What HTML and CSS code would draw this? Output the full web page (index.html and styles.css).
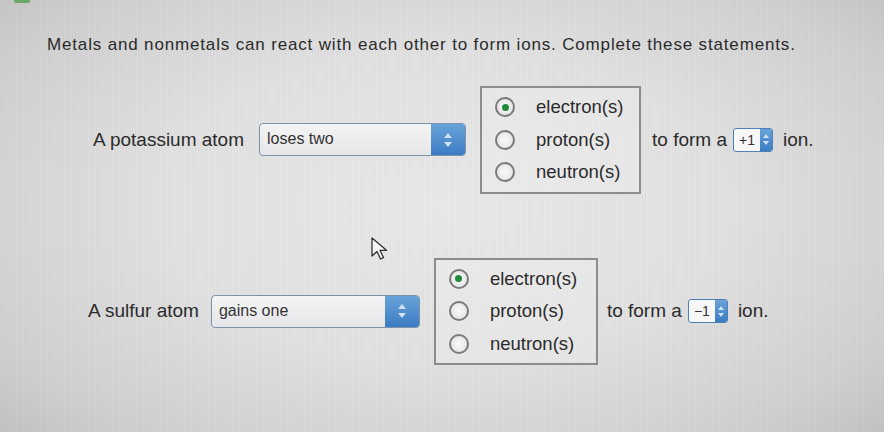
FILE: index.html
```html
<!DOCTYPE html>
<html>
    <head>
        <title>Ions</title><meta charset="UTF-8">
        <link rel="stylesheet" href="styles.css">
    </head>
    <body>
        <div class="page">
            <span class="corner"></span>
            <p class="intro">Metals and nonmetals can react with each other to form ions. Complete these statements.</p>

            <div class="row row-one">
                <span class="lead">A potassium atom</span>
                <div class="select">
                    <span class="value">loses two</span>
                    <span class="arrows"><i class="up"></i><i class="down"></i></span>
                </div>
                <div class="choices">
                    <label class="choice"><span class="dot on"></span>electron(s)</label>
                    <label class="choice"><span class="dot"></span>proton(s)</label>
                    <label class="choice"><span class="dot"></span>neutron(s)</label>
                </div>
                <span class="tail">to form a</span>
                <div class="spin"><span class="num">+1</span><span class="arrows"><i class="up"></i><i class="down"></i></span></div>
                <span class="end">ion.</span>
            </div>

            <div class="row row-two">
                <span class="lead">A sulfur atom</span>
                <div class="select">
                    <span class="value">gains one</span>
                    <span class="arrows"><i class="up"></i><i class="down"></i></span>
                </div>
                <div class="choices">
                    <label class="choice"><span class="dot on"></span>electron(s)</label>
                    <label class="choice"><span class="dot"></span>proton(s)</label>
                    <label class="choice"><span class="dot"></span>neutron(s)</label>
                </div>
                <span class="tail">to form a</span>
                <div class="spin"><span class="num">&minus;1</span><span class="arrows"><i class="up"></i><i class="down"></i></span></div>
                <span class="end">ion.</span>
            </div>

            <svg class="pointer" width="22" height="26" viewBox="0 0 22 26">
                <path d="M2 2 L2 20 L7 15.5 L10.5 23 L13.5 21.6 L10 14.3 L16.5 14.3 Z" fill="#f4f4f4" stroke="#333" stroke-width="1.3" stroke-linejoin="round"/>
            </svg>
        </div>
    </body>
</html>
```
FILE: styles.css
```css
*{margin: 0; padding: 0; box-sizing: border-box;}
body{width: 884px; height: 432px; overflow: hidden; font-family: "Liberation Sans", Arial, sans-serif; color: #2b2b2b;}
.page{
    position: relative; width: 884px; height: 432px; padding-top: 35px;
    background:
        repeating-linear-gradient(90deg, rgba(0,0,0,0.025) 0 1px, transparent 1px 3px),
        radial-gradient(ellipse 72% 80% at 50% 48%, #e9e9ea 0%, #e1e1e2 45%, #d0d0d1 80%, #bfbfc0 100%);
}
.corner{position: absolute; left: 14px; top: 0; width: 16px; height: 3px; background: #6aa86a; border-radius: 0 0 2px 2px;}
.intro{padding-left: 47px; font-size: 17px; line-height: 20px; letter-spacing: 0.84px; color: #2a2a2a;}

/* one statement per row */
.row{display: flex; align-items: center; font-size: 19px;}
.row-one{margin-top: 31px; padding-left: 93px;}
.row-two{margin-top: 64px; padding-left: 88px;}
.lead{margin-right: 15px;}
.row-two .lead{margin-right: 12px;}

/* drop down */
.select{
    width: 207px; height: 33px; display: flex; border: 1px solid #7d93ad; border-radius: 4px; overflow: hidden;
    background: linear-gradient(#f4f4f5, #e6e6e8);
}
.row-two .select{width: 209px;}
.select .value{flex: 1; padding: 6px 0 0 7px; font-size: 16px; color: #333;}
.arrows{display: flex; flex-direction: column; justify-content: center; align-items: center; gap: 4px; background: linear-gradient(#6aa3da, #3b7cc2);}
.select .arrows{width: 34px;}
.arrows i{display: block; width: 0; height: 0; border-left: 4px solid transparent; border-right: 4px solid transparent;}
.arrows .up{border-bottom: 5px solid #cfe2f5;}
.arrows .down{border-top: 5px solid #cfe2f5;}

/* radio group */
.choices{
    margin-left: 14px; width: 161px; padding: 3px 0 3px 13px; border: 2px solid #8c8c8c;
    background: rgba(240,240,240,0.35); font-size: 18.5px;
}
.row-two .choices{width: 164px;}
.choice{display: flex; align-items: center; height: 32.5px;}
.dot{
    width: 20px; height: 20px; margin-right: 21px; border-radius: 50%; border: 2px solid #7a7a7a;
    background: radial-gradient(circle, #fafafa 0%, #dedede 100%); display: flex; align-items: center; justify-content: center;
}
.dot.on::after{content: ""; width: 7px; height: 7px; border-radius: 50%; background: #1e8a3a;}

.tail{margin-left: 11px;}
.row-two .tail{margin-left: 9px;}

/* small number box */
.spin{
    margin-left: 6px; width: 40px; height: 24px; display: flex; border: 1px solid #4f7fb8; border-radius: 3px; overflow: hidden; background: #f7f7f8;
}
.spin .num{flex: 1; text-align: center; font-size: 14px; line-height: 22px; color: #333;}
.spin .arrows{width: 12px; gap: 3px;}
.spin .arrows i{border-left-width: 3px; border-right-width: 3px;}
.spin .arrows .up{border-bottom-width: 4px;}
.spin .arrows .down{border-top-width: 4px;}
.end{margin-left: 10px;}

.pointer{position: absolute; left: 370px; top: 236px;}
```
